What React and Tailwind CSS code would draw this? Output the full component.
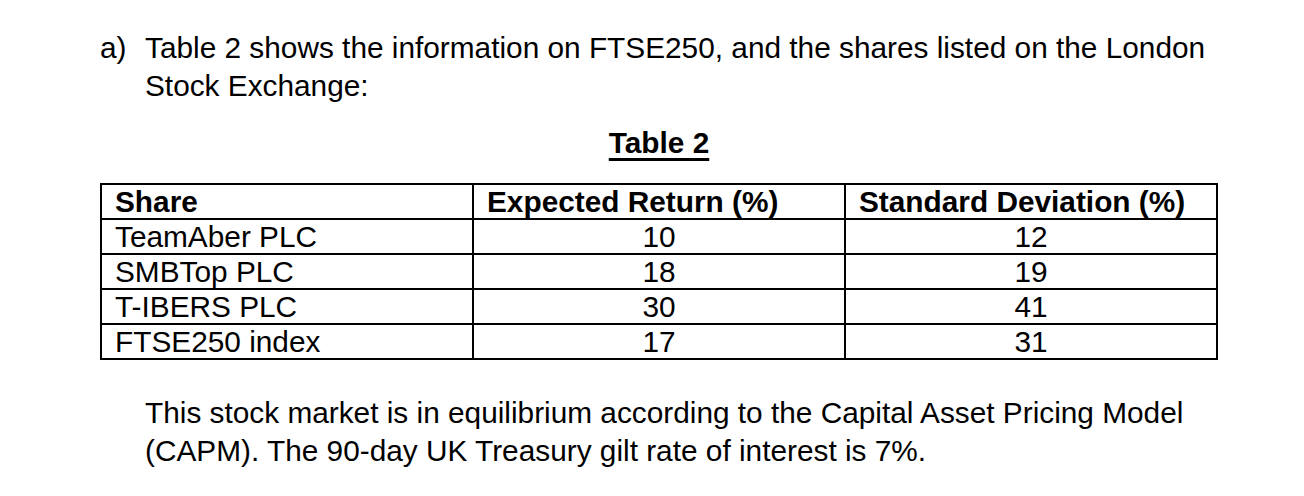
export default function App() {
  const rows = [
    ["TeamAber PLC", "10", "12"],
    ["SMBTop PLC", "18", "19"],
    ["T-IBERS PLC", "30", "41"],
    ["FTSE250 index", "17", "31"],
  ];
  return (
    <div
      className="w-[1304px] h-[496px] bg-white text-black text-[29.8px] leading-[38px] pt-[29px] pl-[100px] overflow-hidden"
      style={{ fontFamily: '"Liberation Sans", Arial, sans-serif' }}
    >
      <div className="flex">
        <div className="w-[45px] shrink-0">a)</div>
        <div className="whitespace-nowrap">
          Table 2 shows the information on FTSE250, and the shares listed on the London
          <br />
          Stock Exchange:
        </div>
      </div>
      <div className="w-[1118px] text-center mt-[19px]">
        <span className="font-bold underline decoration-[3px] underline-offset-[5px]">Table 2</span>
      </div>
      <table className="mt-[21px] w-[1118px] border-collapse table-fixed">
        <thead>
          <tr className="h-[35px]">
            <th className="border-2 border-black text-left font-bold pl-[13px] p-0 leading-none">Share</th>
            <th className="border-2 border-black text-left font-bold pl-[13px] p-0 leading-none">Expected Return (%)</th>
            <th className="border-2 border-black text-left font-bold pl-[13px] p-0 leading-none">Standard Deviation (%)</th>
          </tr>
        </thead>
        <tbody>
          {rows.map((r) => (
            <tr key={r[0]} className="h-[35px]">
              <td className="border-2 border-black text-left pl-[13px] p-0 leading-none">{r[0]}</td>
              <td className="border-2 border-black text-center p-0 leading-none">{r[1]}</td>
              <td className="border-2 border-black text-center p-0 leading-none">{r[2]}</td>
            </tr>
          ))}
        </tbody>
      </table>
      <div className="pl-[45px] mt-[34px] whitespace-nowrap">
        This stock market is in equilibrium according to the Capital Asset Pricing Model
        <br />
        (CAPM). The 90-day UK Treasury gilt rate of interest is 7%.
      </div>
    </div>
  );
}
